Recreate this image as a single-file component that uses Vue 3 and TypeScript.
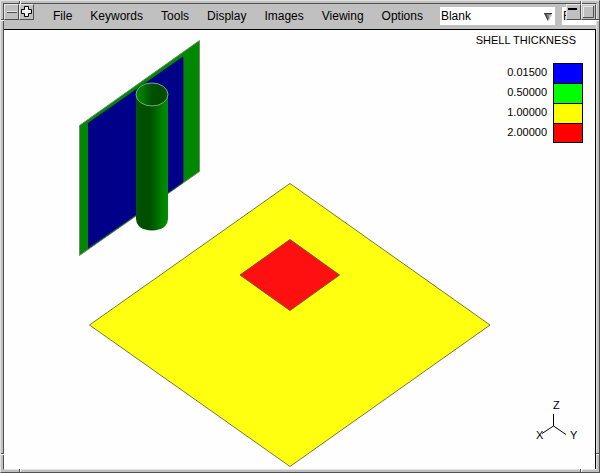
<script setup lang="ts">
import { ref } from 'vue'

interface LegendEntry {
  value: string
  tone: string
}

const menus: string[] = ['File', 'Keywords', 'Tools', 'Display', 'Images', 'Viewing', 'Options']
const mode = ref<string>('Blank')
const view = ref<string>('Front')

const legend: LegendEntry[] = [
  { value: '0.01500', tone: 'blue' },
  { value: '0.50000', tone: 'green' },
  { value: '1.00000', tone: 'yellow' },
  { value: '2.00000', tone: 'red' },
]
</script>

<template>
  <div class="frame">
    <div class="window">
      <header class="bar">
        <nav class="menus">
          <button v-for="menu in menus" :key="menu" type="button" class="menu">{{ menu }}</button>
        </nav>
        <div class="combo">
          <select v-model="mode" class="select" aria-label="Mode">
            <option>Blank</option>
          </select>
          <svg class="caret" viewBox="0 0 8 8" aria-hidden="true">
            <path d="M0 0H8L4 8Z" fill="#808080" />
            <path d="M0 0H8V1H2L4 6V8Z" fill="#303030" />
            <path d="M5 2H8L5 7Z" fill="#c0c0c0" />
          </svg>
        </div>
        <div class="combo clipped">
          <select v-model="view" class="select" aria-label="View">
            <option>Front</option>
          </select>
        </div>
      </header>

      <main class="canvas">
        <svg class="scene" viewBox="4 30 591 439" role="img" aria-label="Shell thickness model">
          <defs>
            <linearGradient id="outer" x1="0" x2="1" y1="0" y2="0">
              <stop offset="0" stop-color="#005800" />
              <stop offset="0.15" stop-color="#004e00" />
              <stop offset="0.45" stop-color="#004e00" />
              <stop offset="0.55" stop-color="#005c00" />
              <stop offset="0.7" stop-color="#007000" />
              <stop offset="0.85" stop-color="#008400" />
              <stop offset="1" stop-color="#009000" />
            </linearGradient>
            <linearGradient id="inner" x1="0" x2="1" y1="0" y2="0">
              <stop offset="0" stop-color="#008a00" />
              <stop offset="0.25" stop-color="#007400" />
              <stop offset="0.5" stop-color="#005000" />
              <stop offset="0.8" stop-color="#004b00" />
              <stop offset="1" stop-color="#005c00" />
            </linearGradient>
          </defs>

          <path d="M79.500 125.500L199.500 40.500V171.500L79.500 255.500Z" fill="#008800" stroke="#6c8c6c" />
          <path d="M88 123L183 56.500V182.500L88 248.500Z" fill="#000088" />
          <path d="M183.500 57V182M88 248.500L183 182.500" fill="none" stroke="#17483f" />

          <path d="M136 94V219Q137 230 152 230.500Q167 230 168 219V94Z" fill="url(#outer)" />
          <ellipse cx="152" cy="94.500" rx="16" ry="11.500" fill="url(#inner)" stroke="#80a480" />

          <path d="M290 183.500L490 325L290 466.500L89.500 325Z" fill="#ffff10" stroke="#77773c" />
          <path d="M290 239.500L339.500 275L290 310.500L240 275Z" fill="#ff1010" stroke="#805030" />

          <path d="M553.500 414V426M553.500 426L542 433.500M553.500 426L566 434.500" fill="none" stroke="#000" />
          <g class="axis">
            <text x="553" y="409">Z</text>
            <text x="536" y="439">X</text>
            <text x="570" y="439">Y</text>
          </g>
        </svg>

        <section class="key">
          <h1 class="title">SHELL THICKNESS</h1>
          <ul class="legend">
            <li v-for="entry in legend" :key="entry.value" class="entry">
              <span>{{ entry.value }}</span>
              <span class="swatch" :class="entry.tone"></span>
            </li>
          </ul>
        </section>
      </main>
    </div>

    <div class="corner left">
      <button type="button" class="control" aria-label="Window menu">
        <svg viewBox="0 0 13 14"><path d="M2 7.500H12" stroke="#505050" /><path d="M2 6.500H12" stroke="#e8e8e8" /></svg>
      </button>
      <button type="button" class="control" aria-label="Pin">
        <svg viewBox="0 0 13 14"><path d="M4.500 1.500H8.500V4.500H11.500V8.500H8.500V11.500H4.500V8.500H1.500V4.500H4.500Z" fill="#f0f0f0" stroke="#000" /></svg>
      </button>
    </div>
    <div class="corner right">
      <button type="button" class="control" aria-label="Minimize">
        <svg viewBox="0 0 13 14"><path d="M1 4H10" stroke="#000" stroke-width="2" /></svg>
      </button>
      <button type="button" class="control" aria-label="Maximize">
        <svg viewBox="0 0 13 14"><path d="M1.500 13V1.500H12" fill="none" stroke="#e8e8e8" /><path d="M1 12.500H11.500V1" fill="none" stroke="#505050" /></svg>
      </button>
    </div>
    <i class="notch side start high"></i>
    <i class="notch side end high"></i>
    <i class="notch side start low"></i>
    <i class="notch side end low"></i>
    <i class="notch rail top near"></i>
    <i class="notch rail top far"></i>
    <i class="notch rail bottom near"></i>
    <i class="notch rail bottom far"></i>
  </div>
</template>

<style>
html,
body,
#app {
  height: 100%;
}

body {
  margin: 0;
}
</style>

<style scoped>
.frame {
  position: relative;
  box-sizing: border-box;
  display: flex;
  min-height: 100%;
  padding: 2px;
  border: 1px solid;
  border-color: #e0e0e0 #505050 #505050 #e0e0e0;
  background: #c0c0c0;
  color: #000;
  font-family: "Liberation Sans", Arial, sans-serif;
  font-size: 12px;
}

.window {
  flex: 1;
  min-width: 0;
  display: flex;
  flex-direction: column;
  border: 1px solid;
  border-color: #505050 #e0e0e0 #e0e0e0 #505050;
}

.bar {
  display: flex;
  align-items: center;
  height: 23px;
  padding: 0 0 2px 49px;
  border-bottom: 1px solid #000;
  overflow: hidden;
}

.menus {
  flex: none;
  display: flex;
  gap: 18px;
  margin-right: 17px;
}

.menu {
  padding: 0;
  border: 0;
  background: none;
  color: inherit;
  font: inherit;
  line-height: 16px;
}

.combo {
  position: relative;
  flex: none;
  width: 115px;
  height: 18px;
}

.clipped {
  flex: 1;
  min-width: 0;
  margin-left: 7px;
}

.select {
  display: block;
  width: 100%;
  height: 100%;
  padding: 0 1px;
  border: 0;
  border-radius: 0;
  appearance: none;
  background: #fff;
  color: inherit;
  font: inherit;
}

.caret {
  position: absolute;
  right: 3px;
  top: 6px;
  width: 8px;
  height: 8px;
}

.canvas {
  position: relative;
  flex: 1;
  display: flex;
  justify-content: flex-end;
  align-items: flex-start;
  border-right: 1px solid #000;
  background: #fefefe;
}

.scene {
  position: absolute;
  inset: 0;
  width: 100%;
  height: 100%;
}

.axis {
  font-size: 11px;
}

.key {
  position: relative;
  padding: 4px 12px 0 0;
  font-size: 11px;
}

.title {
  margin: 0 7px 16px 0;
  font-size: 11px;
  font-weight: 400;
  line-height: 13px;
}

.legend {
  margin: 0;
  padding: 0;
  list-style: none;
}

.entry {
  display: flex;
  justify-content: flex-end;
  gap: 6px;
  height: 20px;
  line-height: 18px;
}

.swatch {
  box-sizing: border-box;
  width: 30px;
  height: 20px;
  border: 1px solid #000;
  border-bottom: 0;
}

.entry:last-child .swatch {
  border-bottom: 1px solid #000;
}

.blue {
  background: #0000ff;
}

.green {
  background: #00ff00;
}

.yellow {
  background: #ffff00;
}

.red {
  background: #ff0000;
}

.corner {
  position: absolute;
  top: 3px;
  display: flex;
}

.left {
  left: 3px;
}

.right {
  right: 3px;
}

.control {
  box-sizing: border-box;
  width: 15px;
  height: 16px;
  padding: 0;
  border: 1px solid;
  border-color: #e8e8e8 #505050 #505050 #e8e8e8;
  background: #c0c0c0;
}

.control svg {
  display: block;
  width: 13px;
  height: 14px;
}

.notch {
  position: absolute;
  background: #505050;
}

.side {
  width: 3px;
  height: 1px;
  box-shadow: 0 1px #fff;
}

.start {
  left: 0;
}

.end {
  right: 0;
}

.high {
  top: 18px;
}

.low {
  bottom: 18px;
}

.rail {
  width: 1px;
  height: 3px;
  box-shadow: 1px 0 #fff;
}

.top {
  top: 0;
}

.bottom {
  bottom: 0;
}

.near {
  left: 18px;
}

.far {
  right: 18px;
}
</style>
